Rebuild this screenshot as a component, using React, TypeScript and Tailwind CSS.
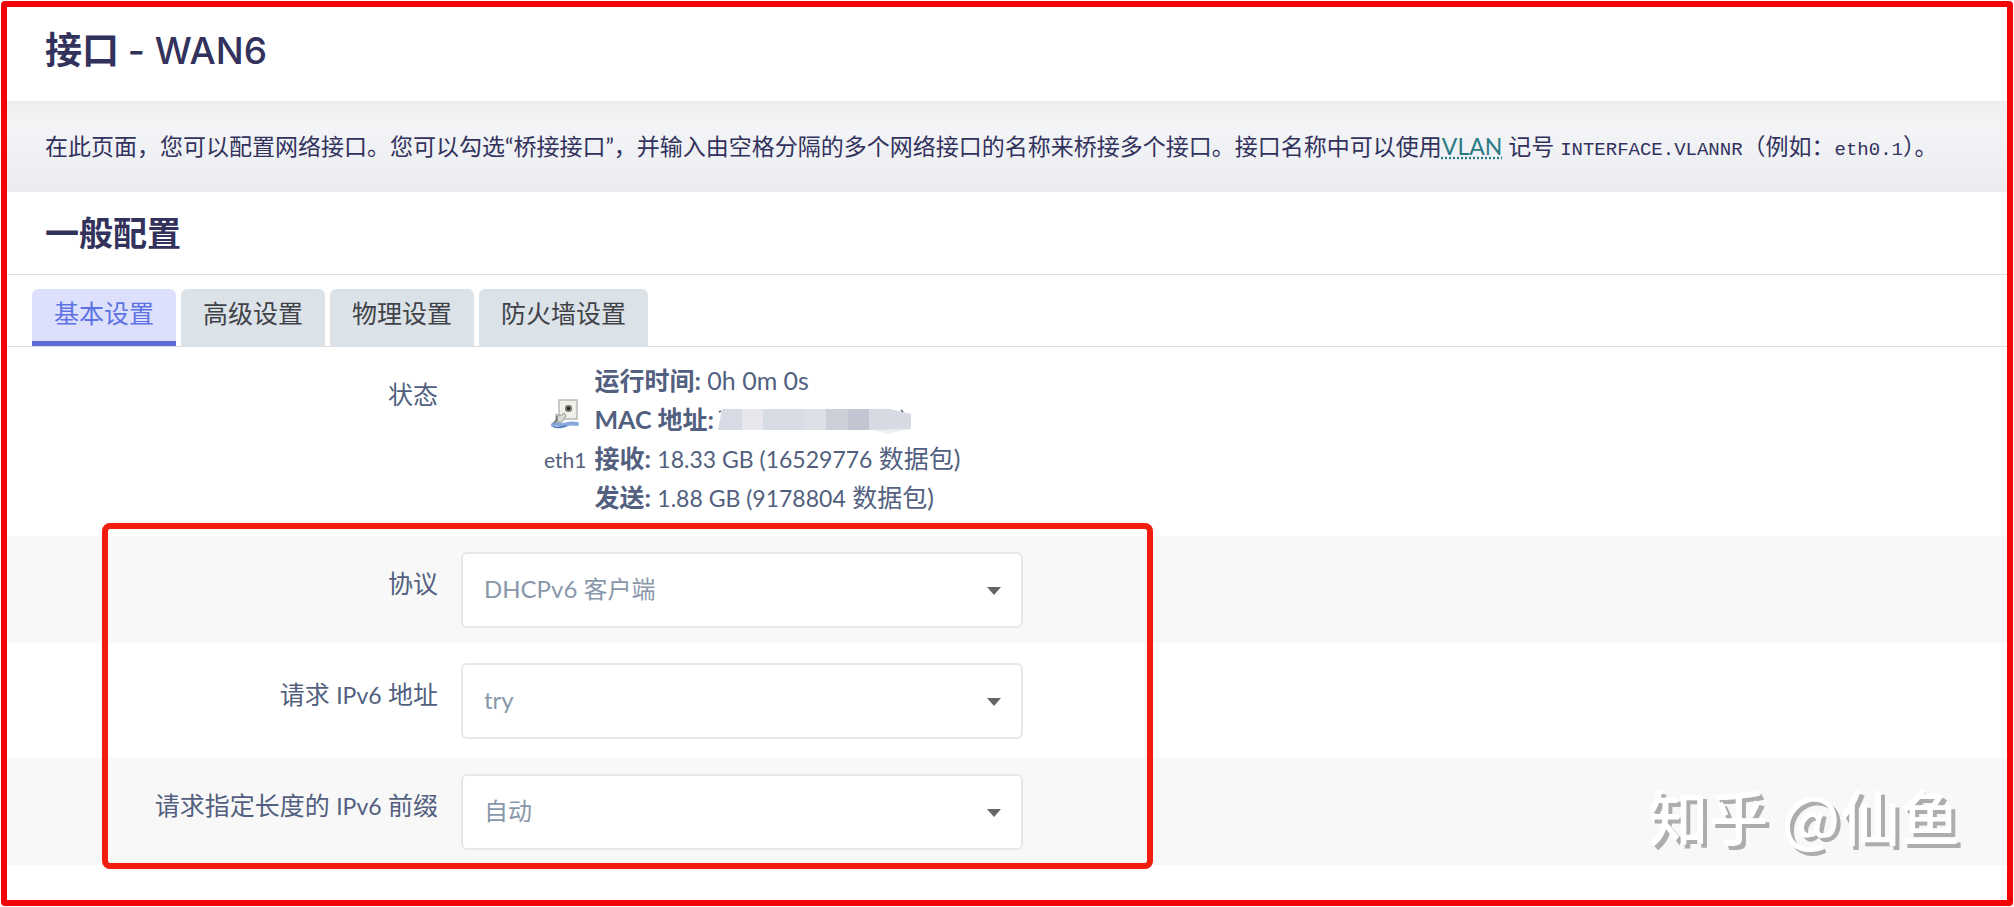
import React from 'react';

const tabs = ['基本设置', '高级设置', '物理设置', '防火墙设置'];

const fields = [
  { id: 'proto', label: '协议', value: 'DHCPv6 客户端', striped: true },
  { id: 'reqaddress', label: <>请求 <Latin>IPv6</Latin> 地址</>, value: 'try', striped: false },
  { id: 'reqprefix', label: <>请求指定长度的 <Latin>IPv6</Latin> 前缀</>, value: '自动', striped: true },
];

// Latin runs are set a little smaller than the Chinese text around them
function Latin({ children }: { children: React.ReactNode }) {
  return <span className="text-[23px] leading-none">{children}</span>;
}

function Code({ children }: { children: React.ReactNode }) {
  return <code className="font-['Liberation_Mono',monospace] text-[19px] leading-none">{children}</code>;
}

function EthernetIcon() {
  return (
    <svg className="h-[30px] w-7" viewBox="0 0 28 30" fill="none" aria-hidden="true">
      <rect x="8" y="1" width="18" height="19" fill="#f0f0ea" stroke="#b9b9b4" strokeWidth="1.5" />
      <rect x="14" y="6" width="7" height="7" rx="3" fill="#77776a" />
      <rect x="16" y="8" width="3" height="3" rx="1" fill="#23231c" />
      <path d="M2 26C3 23 7 26 12 26C16 26 18 23 26 25" stroke="#86a8da" strokeWidth="4" strokeLinecap="round" />
      <path d="M3 28C7 29 12 28 15 27" stroke="#4d7ab8" strokeWidth="1.5" strokeLinecap="round" />
      <path d="M5 15L9 17L13 14L15 17L11 23L5 23Z" fill="#dadad5" stroke="#9b9b96" />
      <path d="M6 17V22M3 24L6 20" stroke="#77776f" strokeWidth="1.5" />
    </svg>
  );
}

// MAC address is masked
function MaskedValue() {
  return (
    <svg className="h-7 w-[194px]" viewBox="0 0 194 28" aria-hidden="true">
      <path d="M6 3H170L193 8V23L182 25L170 28L155 24H0Z" fill="#f0f0f3" />
      <path d="M4 3H24V24H0Z" fill="#d8dbe5" />
      <path d="M24 3H45V24H24Z" fill="#e7e7ed" />
      <path d="M45 3H87V24H45Z" fill="#d8dce4" />
      <path d="M87 3H108V24H87Z" fill="#dcdfe5" />
      <path d="M108 3H130V24H108Z" fill="#cccfd8" />
      <path d="M130 3H151V24H130Z" fill="#c3c5d3" />
      <path d="M151 3H172L193 8V23L151 24Z" fill="#d7dae2" />
      <path d="M1 6L3 5M183 4L185 6" stroke="#525f7f" strokeWidth="1.5" />
    </svg>
  );
}

export default function App() {
  return (
    <div className="min-h-screen bg-white p-px font-['Lato','Noto_Sans_CJK_SC',sans-serif] text-[25px] leading-[34px] text-[#525f7f]">
      <main className="relative min-h-[calc(100vh-2px)] rounded border-6 border-[#f20505] bg-white">
        <h1 className="px-[38px] pt-[22px] pb-7 font-['Inter','Noto_Sans_CJK_SC',sans-serif] text-[37px] leading-[44px] font-bold text-[#32325d]">
          接口 <span className="font-medium">- WAN6</span>
        </h1>

        <p className="bg-linear-to-b from-[#edeef0] via-[#f3f4f6] via-30% to-[#eaecf0] px-[38px] py-[30px] text-[23px] leading-[31px] text-[#32325d]">
          在此页面，您可以配置网络接口。您可以勾选“桥接接口”，并输入由空格分隔的多个网络接口的名称来桥接多个接口。接口名称中可以使用
          <abbr title="Virtual Local Area Network" className="text-[#2b7a86] underline decoration-dotted underline-offset-2">
            VLAN
          </abbr>{' '}
          记号 <Code>INTERFACE.VLANNR</Code>（例如：<Code>eth0.1</Code>）。
        </p>

        <h2 className="border-b border-[#dcdde0] px-[38px] py-5 text-[34px] leading-[42px] font-bold text-[#32325d]">一般配置</h2>

        <nav className="flex gap-[5px] border-b border-[#dcdde0] px-[25px] pt-3.5">
          {tabs.map((tab, i) => (
            <button
              key={tab}
              type="button"
              className={
                i === 0
                  ? 'rounded-t-md border-b-5 border-[#5e6bd6] bg-[#dce0fd] px-[22px] pt-[7px] pb-[11px] text-[#5e72e4]'
                  : 'rounded-t-md bg-[#dce3e8] px-[22px] pt-[7px] pb-4 text-[#404248]'
              }
            >
              {tab}
            </button>
          ))}
        </nav>

        <div className="grid grid-cols-[431px_1fr] gap-x-[23px] pt-3.5 pb-[19px]">
          <div className="pt-4 text-right">状态</div>
          <div className="flex gap-2 pl-[83px]">
            <div className="flex flex-col items-center gap-4 pt-[38px] text-[21px] leading-[30px]">
              <EthernetIcon />
              <span>eth1</span>
            </div>
            <div className="leading-[39px]">
              <div>
                <strong>运行时间:</strong> 0h 0m 0s
              </div>
              <div className="flex items-center gap-1">
                <strong>MAC 地址:</strong>
                <MaskedValue />
              </div>
              <div>
                <strong>接收:</strong> <Latin>18.33 GB (16529776</Latin> 数据包)
              </div>
              <div>
                <strong>发送:</strong> <Latin>1.88 GB (9178804</Latin> 数据包)
              </div>
            </div>
          </div>
        </div>

        <form className="relative space-y-1">
          {fields.map((field) => (
            <div
              key={field.id}
              className={`grid grid-cols-[431px_1fr] gap-x-[23px] pt-4 pb-[15px] ${field.striped ? 'bg-[#f8f8f8]' : 'bg-white'}`}
            >
              <label htmlFor={field.id} className="pt-3.5 text-right">
                {field.label}
              </label>
              <div className="relative w-[562px]">
                <select
                  id={field.id}
                  className="block h-19 w-full appearance-none rounded-md border-2 border-[#e6e7e9] bg-white px-[21px] pb-0.5 text-[24px] text-[#8898aa]"
                >
                  <option>{field.value}</option>
                </select>
                <svg className="pointer-events-none absolute top-[35px] right-[22px] h-2 w-3.5" viewBox="0 0 14 8" aria-hidden="true">
                  <path d="M0 0H14L7 8Z" fill="#666" />
                </svg>
              </div>
            </div>
          ))}
          <div className="pointer-events-none absolute -top-[13px] -bottom-1 left-[95px] w-[1051px] rounded-lg border-6 border-[#f21d0f]" />
        </form>

        <div className="absolute right-[47px] bottom-[45px] font-['Noto_Sans_CJK_SC',sans-serif] text-[60px] leading-[80px] font-medium text-white [text-shadow:4px_4px_0_#adadad]">
          知乎 @仙鱼
        </div>
      </main>
    </div>
  );
}
